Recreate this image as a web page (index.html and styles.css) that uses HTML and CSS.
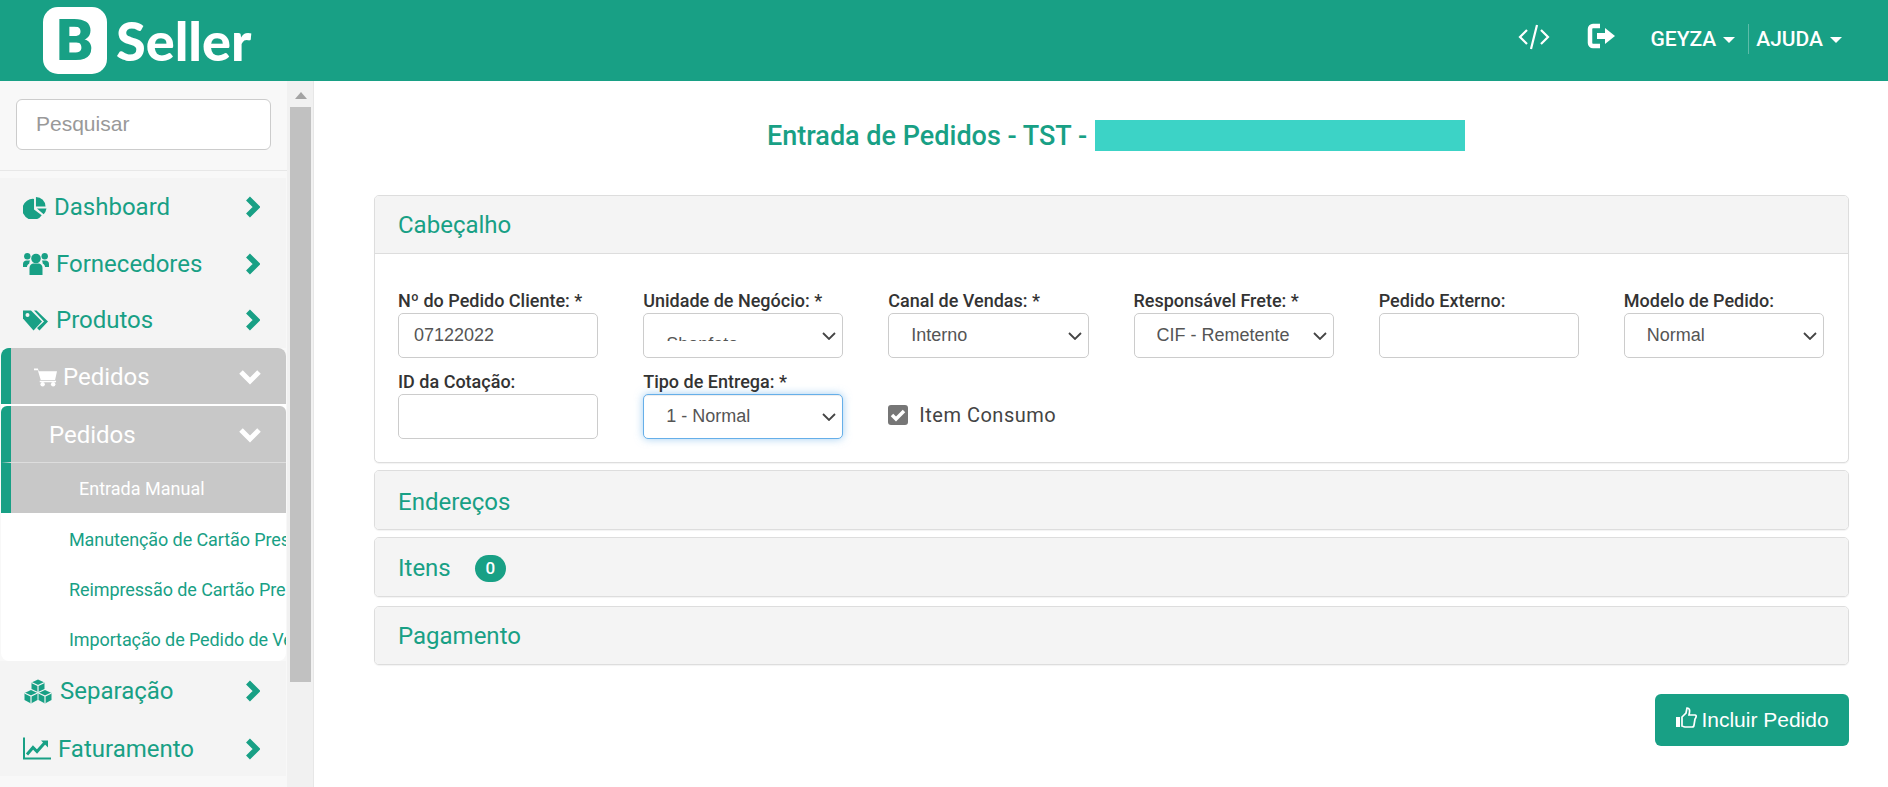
FILE: index.html
```html
<!DOCTYPE html>
<html lang="pt-BR">
<head>
  <meta charset="UTF-8">
  <title>Entrada de Pedidos</title>
  <link rel="stylesheet" href="styles.css">
</head>
<body>
  <header class="topbar">
    <div class="brand">
      <span class="brand-box">B</span>
      <span class="brand-name">Seller</span>
    </div>
    <nav class="topnav">
      <svg class="ico-code" viewBox="0 0 32 26"><path d="M9 6 2 13l7 7M23 6l7 7-7 7M19 1l-6 24" fill="none" stroke="#fff" stroke-width="2.200"/></svg>
      <svg class="ico-logout" viewBox="0 0 30 26"><path d="M13 3H6a3 3 0 0 0-3 3v14a3 3 0 0 0 3 3h7" fill="none" stroke="#fff" stroke-width="4.500"/><path d="M10 10h8V5l10 8-10 8v-5h-8z" fill="#fff"/></svg>
      <a class="topnav-link">GEYZA<i class="caret"></i></a>
      <span class="topnav-sep"></span>
      <a class="topnav-link">AJUDA<i class="caret"></i></a>
    </nav>
  </header>

  <div class="page">
    <aside class="sidebar">
      <div class="sidebar-inner">
        <div class="search-wrap">
          <input class="search" type="text" placeholder="Pesquisar">
        </div>
        <ul class="menu">
          <li class="menu-item">
            <svg class="ico" viewBox="0 0 24 24"><path d="M11 3v11l8 6a11 11 0 1 1-8-17z" fill="#18a085"/><path d="M13 1a10 10 0 0 1 10 10H13z" fill="#18a085"/><path d="M14 13h10a11 11 0 0 1-3 6z" fill="#18a085"/></svg>
            <span class="menu-text">Dashboard</span>
            <svg class="chev" viewBox="0 0 16 22"><path d="M4 2.500 12.500 11 4 19.500" fill="none" stroke="#18a085" stroke-width="5.500"/></svg>
          </li>
          <li class="menu-item">
            <svg class="ico ico-wide" viewBox="0 0 26 23"><circle cx="13" cy="6.500" r="4.800" fill="#18a085"/><path d="M6.500 23v-7c0-3 2-4.500 4-4.500h5c2 0 4 1.500 4 4.500v7z" fill="#18a085"/><circle cx="4.300" cy="4.300" r="3.200" fill="#18a085"/><circle cx="21.700" cy="4.300" r="3.200" fill="#18a085"/><path d="M0 15v-3c0-2 1.500-3.500 3.500-3.500h3.500c-.5 1-.7 2-.7 3-1.500 1-2.300 2-2.300 3.500zM26 15v-3c0-2-1.500-3.500-3.500-3.500H19c.5 1 .7 2 .7 3 1.500 1 2.300 2 2.300 3.500z" fill="#18a085"/></svg>
            <span class="menu-text">Fornecedores</span>
            <svg class="chev" viewBox="0 0 16 22"><path d="M4 2.500 12.500 11 4 19.500" fill="none" stroke="#18a085" stroke-width="5.500"/></svg>
          </li>
          <li class="menu-item">
            <svg class="ico ico-wide" viewBox="0 0 26 22"><path d="M0 1h8l11 11-8.500 9L0 9z" fill="#18a085"/><circle cx="4.500" cy="5.500" r="2" fill="#f4f4f4"/><path d="M11 1h2.500L25 12l-8.500 9-2.500-2.500 7-6.500z" fill="#18a085"/></svg>
            <span class="menu-text">Produtos</span>
            <svg class="chev" viewBox="0 0 16 22"><path d="M4 2.500 12.500 11 4 19.500" fill="none" stroke="#18a085" stroke-width="5.500"/></svg>
          </li>
          <li class="menu-open">
            <div class="open-row open-first">
              <svg class="ico-cart" viewBox="0 0 24 20"><path d="M0 1h4l1 3h19l-2 9H7L4 3H0z" fill="#fff"/><circle cx="9" cy="17.500" r="2.300" fill="#fff"/><circle cx="20" cy="17.500" r="2.300" fill="#fff"/><path d="M6 14h17v1.500H6z" fill="#fff"/></svg>
              <span class="open-text">Pedidos</span>
              <svg class="chev-down" viewBox="0 0 24 16"><path d="M3 3l9 9 9-9" fill="none" stroke="#fff" stroke-width="5"/></svg>
            </div>
            <div class="open-row open-second">
              <span class="open-text">Pedidos</span>
              <svg class="chev-down" viewBox="0 0 24 16"><path d="M3 3l9 9 9-9" fill="none" stroke="#fff" stroke-width="5"/></svg>
            </div>
            <div class="open-row open-active">Entrada Manual</div>
            <ul class="submenu">
              <li>Manutenção de Cartão Presente</li>
              <li>Reimpressão de Cartão Presente</li>
              <li>Importação de Pedido de Venda</li>
            </ul>
          </li>
          <li class="menu-item item-sep">
            <svg class="ico ico-cubes" viewBox="0 0 30 25"><path d="M15 .5l6.500 3v6.500L15 13l-6.500-3V3.500zM8 11l6.500 3v7L8 24.500 1.500 21v-7zM22 11l6.500 3v7L22 24.500 15.500 21v-7z" fill="#18a085"/><path d="M8.500 3.500l6.500 3 6.500-3M15 6.500V13M1.500 14 8 17l6.500-3M8 17v7.500M15.500 14l6.500 3 6.500-3M22 17v7.500" fill="none" stroke="#f4f4f4" stroke-width="1.200"/></svg>
            <span class="menu-text">Separação</span>
            <svg class="chev" viewBox="0 0 16 22"><path d="M4 2.500 12.500 11 4 19.500" fill="none" stroke="#18a085" stroke-width="5.500"/></svg>
          </li>
          <li class="menu-item">
            <svg class="ico ico-line" viewBox="0 0 28 22"><path d="M1 0v21h27" fill="none" stroke="#18a085" stroke-width="2"/><path d="M4 17l6-7 4 4 8-9" fill="none" stroke="#18a085" stroke-width="3"/><path d="M18 3h7v7z" fill="#18a085"/></svg>
            <span class="menu-text">Faturamento</span>
            <svg class="chev" viewBox="0 0 16 22"><path d="M4 2.500 12.500 11 4 19.500" fill="none" stroke="#18a085" stroke-width="5.500"/></svg>
          </li>
        </ul>
      </div>
      <div class="scrollbar">
        <span class="scroll-up"></span>
        <div class="scroll-thumb"></div>
      </div>
    </aside>

    <main class="content">
      <h1 class="title">Entrada de Pedidos - TST - <span class="title-mask"></span></h1>

      <section class="panel">
        <div class="panel-head panel-head-open">Cabeçalho</div>
        <div class="panel-body">
          <div class="form-grid">
            <div class="field">
              <label>Nº do Pedido Cliente: *</label>
              <input class="control" type="text" value="07122022">
            </div>
            <div class="field">
              <label>Unidade de Negócio: *</label>
              <select class="control select-shifted"><option>Shopfato</option></select>
            </div>
            <div class="field">
              <label>Canal de Vendas: *</label>
              <select class="control"><option>Interno</option></select>
            </div>
            <div class="field">
              <label>Responsável Frete: *</label>
              <select class="control"><option>CIF - Remetente</option></select>
            </div>
            <div class="field">
              <label>Pedido Externo:</label>
              <input class="control" type="text">
            </div>
            <div class="field">
              <label>Modelo de Pedido:</label>
              <select class="control"><option>Normal</option></select>
            </div>
            <div class="field">
              <label>ID da Cotação:</label>
              <input class="control" type="text">
            </div>
            <div class="field">
              <label>Tipo de Entrega: *</label>
              <select class="control control-focus"><option>1 - Normal</option></select>
            </div>
            <div class="check">
              <span class="check-box">
                <svg viewBox="0 0 20 20"><path d="M4 10l4 4 8-8" fill="none" stroke="#fff" stroke-width="3.500"/></svg>
              </span>
              <span class="check-text">Item Consumo</span>
            </div>
          </div>
        </div>
      </section>

      <section class="panel"><div class="panel-head panel-head-low">Endereços</div></section>
      <section class="panel panel-items"><div class="panel-head panel-head-mid">Itens <span class="badge">0</span></div></section>
      <section class="panel"><div class="panel-head panel-head-last">Pagamento</div></section>

      <div class="actions">
        <button class="btn-primary">
          <svg viewBox="0 0 22 22"><path d="M1 10h4v10H1z" fill="#fff"/><path d="M7 10l4-4 1-5c3 0 3 3 2 7h6c2 0 1 3 0 4l-1 6c0 1-1 2-2 2h-7c-2 0-2-1-3-1z" fill="none" stroke="#fff" stroke-width="1.700"/></svg>
          Incluir Pedido
        </button>
      </div>
    </main>
  </div>
</body>
</html>
```

FILE: styles.css
```css
* {
  box-sizing: border-box;
}
html, body {
  height: 100%;
}
body {
  margin: 0;
  overflow: hidden;
  background: #fff;
  font-family: Roboto, "Liberation Sans", sans-serif;
  color: #333;
}
ul, li {
  list-style: none;
  margin: 0;
  padding: 0;
}

/* topo */
.topbar {
  height: 81px;
  background: #18a085;
  display: flex;
  align-items: center;
  justify-content: space-between;
  padding: 0 46px 0 43px;
}
.brand {
  display: flex;
  align-items: center;
  gap: 9px;
}
.brand-box {
  width: 64px;
  height: 67px;
  border-radius: 15px;
  background: #fff;
  color: #18a085;
  font-size: 58px;
  font-weight: 900;
  line-height: 67px;
  text-align: center;
}
.brand-name {
  color: #fff;
  font-family: Lato, sans-serif;
  font-size: 54px;
  font-weight: 900;
  line-height: 67px;
}
.topnav {
  display: flex;
  align-items: center;
  color: #fff;
  padding-bottom: 4px;
}
.ico-code {
  width: 32px;
  height: 26px;
  margin: 0 37px 4px 0;
}
.ico-logout {
  width: 30px;
  height: 26px;
  margin: 0 34px 6px 0;
}
.topnav-link {
  font-size: 21px;
  font-weight: 500;
  white-space: nowrap;
}
.topnav-sep {
  width: 1px;
  height: 30px;
  background: rgba(255, 255, 255, .3);
  margin: 0 7px 0 13px;
}
.caret {
  display: inline-block;
  margin-left: 7px;
  vertical-align: middle;
  border-top: 6px solid #fff;
  border-left: 6px solid transparent;
  border-right: 6px solid transparent;
}

/* lateral */
.page {
  display: flex;
  height: 706px;
}
.sidebar {
  width: 314px;
  flex: none;
  display: flex;
  background: #f8f8f8;
  border-right: 1px solid #e7e7e7;
}
.sidebar-inner {
  width: 287px;
  flex: none;
  overflow: hidden;
}
.search-wrap {
  padding: 18px 16px 20px;
  border-bottom: 1px solid #e7e7e7;
}
.search {
  display: block;
  width: 255px;
  height: 51px;
  border: 1px solid #ccc;
  border-radius: 6px;
  padding: 0 19px 2px;
  font-family: "Liberation Sans", sans-serif;
  font-size: 21px;
  outline: none;
}
.search::placeholder {
  color: #999;
}
.menu {
  margin: 7px 1px 0 0;
}
.menu-item {
  height: 56.500px;
  display: flex;
  align-items: center;
  background: #f4f4f4;
  padding: 2px 26px 0 23px;
  color: #18a085;
}
.item-sep {
  height: 59px;
}
.ico {
  width: 24px;
  height: 23px;
  flex: none;
}
.ico-wide {
  width: 26px;
}
.ico-cubes {
  width: 30px;
  height: 25px;
}
.ico-line {
  width: 28px;
}
.menu-text {
  flex: 1;
  font-size: 24px;
  margin-left: 7px;
}
.chev {
  width: 16px;
  height: 22px;
  flex: none;
}
.menu-open {
  background: #fff;
  border-radius: 8px;
  overflow: hidden;
  margin-left: 1px;
}
.open-row {
  background: #c8c8c8;
  color: #fff;
  border-left: 10px solid #18a085;
  display: flex;
  align-items: center;
}
.open-first {
  height: 56px;
  padding: 2px 24px 0 23px;
  border-radius: 6px 6px 0 0;
  margin-bottom: 2px;
}
.open-second {
  height: 57px;
  padding: 2px 24px 0 38px;
  border-radius: 6px 6px 0 0;
  border-bottom: 1px solid #ddd;
}
.open-active {
  height: 50px;
  padding: 2px 0 0 68px;
  font-size: 18px;
}
.ico-cart {
  width: 23px;
  height: 20px;
  flex: none;
  margin-right: 6px;
}
.open-text {
  flex: 1;
  font-size: 24px;
}
.chev-down {
  width: 24px;
  height: 16px;
  flex: none;
}
.submenu {
  height: 148px;
}
.submenu li {
  height: 50px;
  line-height: 54px;
  padding-left: 68px;
  color: #18a085;
  font-size: 18px;
  letter-spacing: -.1px;
  white-space: nowrap;
  overflow: hidden;
}

/* barra de rolagem */
.scrollbar {
  width: 26px;
  flex: none;
  background: #f1f1f1;
  padding: 0 2px 0 3px;
}
.scroll-up {
  display: block;
  width: 0;
  margin: 11px auto 8px;
  border-bottom: 7px solid #a3a3a3;
  border-left: 6px solid transparent;
  border-right: 6px solid transparent;
}
.scroll-thumb {
  height: 575px;
  background: #c1c1c1;
}

/* conteudo */
.content {
  flex: 1;
  padding: 0 39px 0 60px;
}
.title {
  margin: 39px 0 0;
  height: 75px;
  display: flex;
  align-items: flex-start;
  padding-left: 393px;
  color: #18a085;
  font-size: 27px;
  font-weight: 500;
  line-height: 33px;
  white-space: pre;
}
.title-mask {
  display: inline-block;
  width: 370px;
  height: 31px;
  margin-left: 1px;
  background: #3cd3c6;
}
.panel {
  border: 1px solid #ddd;
  border-radius: 5px;
  background: #fff;
  margin-bottom: 7px;
  box-shadow: 0 1px 1px rgba(0, 0, 0, .05);
  overflow: hidden;
}
.panel-items {
  margin-bottom: 9px;
}
.panel-head {
  height: 58px;
  display: flex;
  align-items: center;
  gap: 24px;
  padding: 0 23px;
  background: #f4f4f4;
  color: #18a085;
  font-size: 24px;
}
.panel-head-low {
  padding-top: 3px;
}
.panel-head-mid {
  padding-top: 2px;
}
.panel-head-last {
  height: 57px;
}
.panel-head-open {
  border-bottom: 1px solid #ddd;
}
.panel-body {
  padding: 35px 24px 23px 23px;
}
.form-grid {
  display: grid;
  grid-template-columns: repeat(6, 1fr);
  column-gap: 45px;
  row-gap: 12px;
}
.field label {
  display: block;
  font-size: 18px;
  font-weight: 500;
  line-height: 24px;
  white-space: nowrap;
}
.control {
  display: block;
  width: 100%;
  height: 45px;
  border: 1px solid #ccc;
  border-radius: 5px;
  background: #fff;
  padding: 0 15px;
  font-family: "Liberation Sans", sans-serif;
  font-size: 18px;
  color: #555;
  outline: none;
}
select.control {
  appearance: none;
  padding: 0 24px 2px 22px;
  background: #fff url("data:image/svg+xml,%3Csvg xmlns='http://www.w3.org/2000/svg' width='14' height='8'%3E%3Cpath d='M1 1l6 6 6-6' fill='none' stroke='%23444' stroke-width='1.800'/%3E%3C/svg%3E") no-repeat right 6px center;
}
select.select-shifted {
  padding-top: 20px;
  padding-bottom: 16px;
}
.control-focus {
  border-color: #66afe9;
  box-shadow: inset 0 1px 1px rgba(0, 0, 0, .075), 0 0 8px rgba(102, 175, 233, .6);
}
.check {
  display: flex;
  align-items: center;
  gap: 11px;
  padding-top: 20px;
}
.check-box {
  width: 20px;
  height: 20px;
  border-radius: 3px;
  background: #767676;
  display: block;
}
.check-box svg {
  display: block;
}
.check-text {
  font-size: 20px;
  letter-spacing: .5px;
  color: #444;
}
.badge {
  display: inline-block;
  min-width: 31px;
  height: 27px;
  border-radius: 14px;
  background: #18a085;
  color: #fff;
  font-size: 17px;
  font-weight: 500;
  line-height: 27px;
  text-align: center;
}
.actions {
  display: flex;
  justify-content: flex-end;
  padding-top: 22px;
}
.btn-primary {
  width: 194px;
  height: 52px;
  border: 0;
  border-radius: 6px;
  background: #18a085;
  color: #fff;
  font-family: "Liberation Sans", sans-serif;
  font-size: 21px;
  display: flex;
  align-items: center;
  justify-content: center;
  gap: 4px;
}
.btn-primary svg {
  width: 22px;
  height: 22px;
  margin-top: -4px;
}
```
